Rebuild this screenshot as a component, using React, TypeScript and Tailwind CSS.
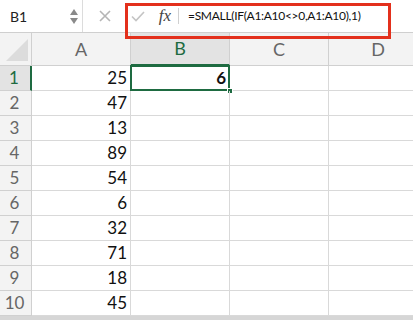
const rows = [25, 47, 13, 89, 54, 6, 32, 71, 18, 45]
const cols = ["A", "B", "C", "D"]

const font = { fontFamily: "Lato, 'Open Sans', sans-serif" }

export default function App() {
  return (
    <div className="relative w-[413px] h-[320px] overflow-hidden bg-white" style={font}>
      {/* formula bar */}
      <div className="flex h-[33px] items-center border-b border-[#cfcfcf] bg-white">
        <div className="flex h-full w-[83px] items-center justify-between border-r border-[#dcdcdc] pl-[10px] pr-[4px]">
          <span className="text-[14px] text-[#222]">B1</span>
          <div className="flex flex-col items-center gap-[3px]">
            <svg width="8" height="6" viewBox="0 0 8 6"><path d="M4 0 L8 6 L0 6 Z" fill="#8a8a8a" /></svg>
            <svg width="8" height="6" viewBox="0 0 8 6"><path d="M0 0 L8 0 L4 6 Z" fill="#8a8a8a" /></svg>
          </div>
        </div>
        <div className="flex w-[42px] justify-center pl-[2px]">
          <svg width="12" height="12" viewBox="0 0 12 12"><path d="M1 1 L11 11 M11 1 L1 11" stroke="#b5b5b5" strokeWidth="1.6" /></svg>
        </div>
        <div className="flex w-[26px] justify-center">
          <svg width="14" height="11" viewBox="0 0 14 11"><path d="M1 5.5 L5 9.5 L13 1" stroke="#c4c4c4" strokeWidth="1.6" fill="none" /></svg>
        </div>
        <div className="flex w-[22px] justify-center pl-[6px]">
          <span className="text-[17px] italic text-[#444]" style={{ fontFamily: "'Liberation Serif', serif" }}>fx</span>
        </div>
        <div className="ml-[5px] h-[16px] w-px bg-[#d0d0d0]" />
        <div className="pl-[9px] text-[12px] tracking-[-0.3px] text-[#111]">=SMALL(IF(A1:A10&lt;&gt;0,A1:A10),1)</div>
      </div>

      {/* red annotation */}
      <div className="absolute left-[125px] top-[3px] h-[36px] w-[266px] border-[3px] border-[#e3301c]" />

      {/* sheet */}
      <div className="grid grid-cols-[32px_99px_99px_99px_99px]">
        <div className="relative h-[33px] border-r border-b border-[#d0d0d0] bg-[#f3f3f3]">
          <svg className="absolute right-[3px] bottom-[4px]" width="22" height="22" viewBox="0 0 22 22"><path d="M22 0 L22 22 L0 22 Z" fill="#dcdcdc" /></svg>
        </div>
        {cols.map((c) => (
          <div
            key={c}
            className={
              c === "B"
                ? "flex h-[33px] items-center justify-center border-r border-b-2 border-r-[#d0d0d0] border-b-[#1e6b41] bg-[#e3e3e3] text-[18px] text-[#1e6b41]"
                : "flex h-[33px] items-center justify-center border-r border-b border-[#d0d0d0] bg-[#f3f3f3] text-[18px] text-[#666]"
            }
          >
            {c}
          </div>
        ))}
        {rows.map((v, i) => (
          <Row key={i} n={i + 1} v={v} />
        ))}
      </div>
      <div className="h-[4px] bg-[#d6d6d6]" />
    </div>
  )
}

function Row({ n, v }: { n: number; v: number }) {
  const sel = n === 1
  return (
    <>
      <div
        className={
          sel
            ? "flex h-[25px] items-center justify-center border-r-2 border-b border-r-[#1e6b41] border-b-[#d0d0d0] bg-[#e3e3e3] pr-[2px] text-[17px] text-[#1e6b41]"
            : "flex h-[25px] items-center justify-center border-r border-b border-[#d0d0d0] bg-[#f3f3f3] pr-[2px] text-[17px] text-[#666]"
        }
      >
        {n}
      </div>
      <div className="flex h-[25px] items-center justify-end border-r border-b border-[#d9d9d9] pr-[3px] text-[17px] text-[#111]">
        {v}
      </div>
      <div className="relative flex h-[25px] items-center justify-end border-r border-b border-[#d9d9d9] pr-[3px] text-[17px] font-bold text-[#111]">
        {sel && (
          <>
            <div className="absolute -left-px -top-px h-[26px] w-[100px] border-2 border-[#1e6b41]" />
            <div className="absolute -right-[4px] -bottom-[4px] h-[6px] w-[6px] border border-white bg-[#1e6b41]" />
            <span className="relative">6</span>
          </>
        )}
      </div>
      <div className="h-[25px] border-r border-b border-[#d9d9d9]" />
      <div className="h-[25px] border-r border-b border-[#d9d9d9]" />
    </>
  )
}
